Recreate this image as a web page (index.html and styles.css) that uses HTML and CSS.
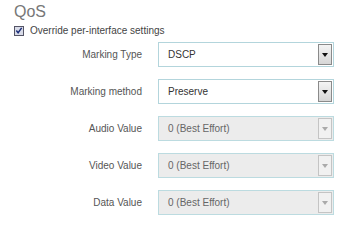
FILE: index.html
```html
<!DOCTYPE html>
<html lang="en">
<head>
	<meta charset="UTF-8">
	<title>QoS</title>
	<link rel="stylesheet" href="styles.css">
</head>
<body>
	<section class="qos">
		<h2 class="qos-title">QoS</h2>
		<label class="override">
			<span class="check">
				<svg width="9" height="9" viewBox="0 0 9 9"><path d="M1.5 4.5 L3.5 7 L7.5 1.5" fill="none" stroke="#1c2f7a" stroke-width="1.6"/></svg>
			</span>
			Override per-interface settings
		</label>
		<div class="rows">
			<div class="row">
				<span class="row-label">Marking Type</span>
				<div class="select">
					<span class="select-text">DSCP</span>
					<span class="select-btn"><i class="arrow"></i></span>
				</div>
			</div>
			<div class="row">
				<span class="row-label">Marking method</span>
				<div class="select">
					<span class="select-text">Preserve</span>
					<span class="select-btn"><i class="arrow"></i></span>
				</div>
			</div>
			<div class="row">
				<span class="row-label">Audio Value</span>
				<div class="select disabled">
					<span class="select-text">0 (Best Effort)</span>
					<span class="select-btn"><i class="arrow"></i></span>
				</div>
			</div>
			<div class="row">
				<span class="row-label">Video Value</span>
				<div class="select disabled">
					<span class="select-text">0 (Best Effort)</span>
					<span class="select-btn"><i class="arrow"></i></span>
				</div>
			</div>
			<div class="row">
				<span class="row-label">Data Value</span>
				<div class="select disabled">
					<span class="select-text">0 (Best Effort)</span>
					<span class="select-btn"><i class="arrow"></i></span>
				</div>
			</div>
		</div>
	</section>
</body>
</html>
```
FILE: styles.css
```css
* {
	box-sizing: border-box;
	margin: 0;
	padding: 0;
}

body {
	background: #fff;
	font-family: "Liberation Sans", Arial, sans-serif;
	color: #333;
}

.qos {
	padding: 2px 0 0 14px;
}

.qos-title {
	font-size: 16px;
	font-weight: normal;
	color: #777;
	line-height: 20px;
}

.override {
	display: flex;
	align-items: center;
	font-size: 10px;
	color: #444;
	line-height: 13px;
	margin-top: 2px;
}

.check {
	display: inline-flex;
	align-items: center;
	justify-content: center;
	width: 10px;
	height: 10px;
	border: 1px solid #556;
	background: #d8dbe8;
	margin: 0 6px 0 0;
}

.rows {
	margin-top: 5px;
}

.row {
	display: flex;
	align-items: center;
	height: 25px;
	margin-bottom: 12px;
}

.row-label {
	width: 129px;
	padding-right: 1px;
	text-align: right;
	font-size: 10px;
	color: #555;
}

.select {
	display: flex;
	align-items: center;
	margin-left: 15px;
	width: 176px;
	height: 25px;
	border: 1px solid #b3d5dc;
	background: #fff;
}

.select-text {
	flex: 1;
	padding-left: 9px;
	font-size: 10px;
	color: #333;
}

.select-btn {
	display: flex;
	align-items: center;
	justify-content: center;
	width: 14px;
	height: 21px;
	margin-right: 1px;
	border: 1px solid #8a8a8a;
	background: linear-gradient(#f4f4f4, #d6d6d6);
}

.arrow {
	width: 0;
	height: 0;
	border-left: 3px solid transparent;
	border-right: 3px solid transparent;
	border-top: 4px solid #111;
}

.disabled {
	background: #ececec;
	border-color: #bcdbe0;
}

.disabled .select-text {
	color: #666;
}

.disabled .select-btn {
	background: #f1f1f1;
	border-color: #c4c4c4;
}

.disabled .arrow {
	border-top-color: #aaa;
}
```
